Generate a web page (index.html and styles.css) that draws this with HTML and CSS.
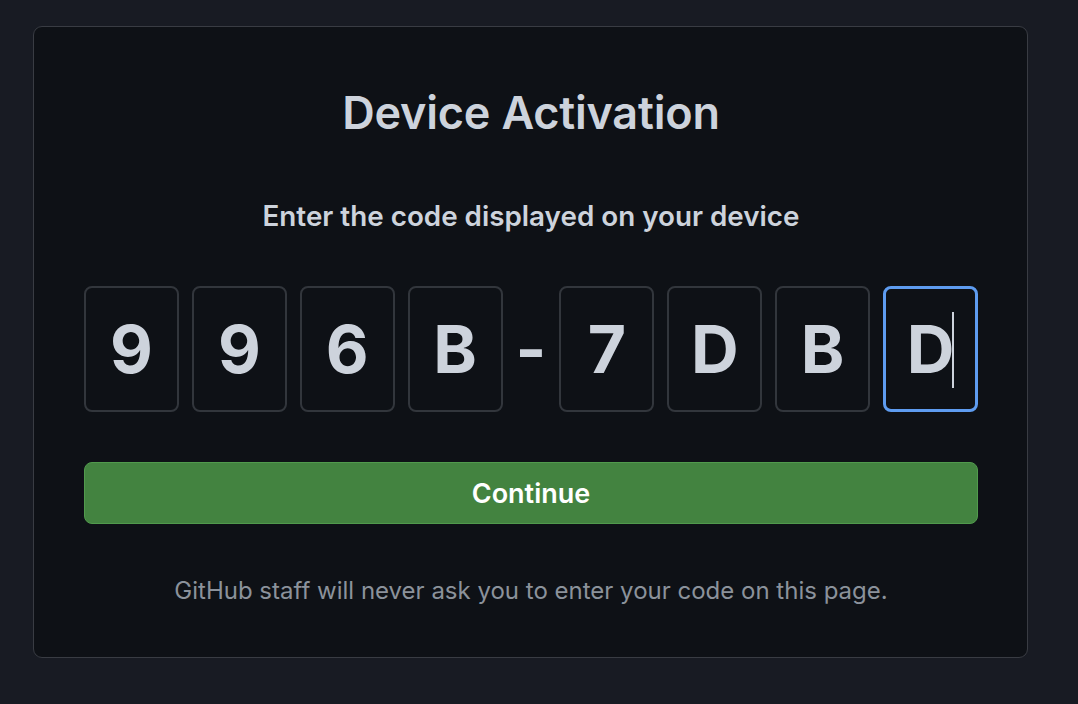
FILE: index.html
```html
<!DOCTYPE html>
<html lang="en">
<head>
<meta charset="utf-8">
<title>Device Activation</title>
<link rel="stylesheet" href="styles.css">
</head>
<body>
<main class="card">
  <h1 class="title">Device Activation</h1>
  <p class="subtitle">Enter the code displayed on your device</p>
  <div class="code-row">
    <div class="digit">9</div>
    <div class="digit">9</div>
    <div class="digit">6</div>
    <div class="digit">B</div>
    <div class="dash">-</div>
    <div class="digit">7</div>
    <div class="digit">D</div>
    <div class="digit">B</div>
    <div class="digit digit-focus">D<span class="caret"></span></div>
  </div>
  <button class="continue" type="button">Continue</button>
  <p class="notice">GitHub staff will never ask you to enter your code on this page.</p>
</main>
</body>
</html>
```

FILE: styles.css
```css
html, body {
  margin: 0;
  padding: 0;
  background: #181b23;
  font-family: Inter, "Noto Sans", "Liberation Sans", sans-serif;
}

body {
  padding: 26px 0 0 33px;
}

.card {
  box-sizing: border-box;
  width: 995px;
  background: #0e1116;
  border: 1.5px solid #393c43;
  border-radius: 9px;
  padding: 58px 49px 52px 50px;
  display: flex;
  flex-direction: column;
  align-items: stretch;
}

.title {
  margin: 0;
  text-align: center;
  font-size: 45px;
  line-height: 56px;
  font-weight: 600;
  color: #cdd3dc;
  letter-spacing: -0.2px;
}

.subtitle {
  margin: 59px 0 0;
  text-align: center;
  font-size: 27.8px;
  line-height: 32px;
  font-weight: 600;
  color: #cdd3dc;
}

.code-row {
  margin-top: 54px;
  display: flex;
  gap: 13px;
  height: 126px;
}

.digit {
  box-sizing: border-box;
  position: relative;
  width: 95px;
  height: 126px;
  border: 2px solid #32363c;
  border-radius: 8px;
  display: flex;
  align-items: center;
  justify-content: center;
  font-size: 66px;
  font-weight: 700;
  color: #cdd3dc;
}

.digit-focus {
  border: 3px solid #5e9cf0;
}

.caret {
  position: absolute;
  left: 66px;
  top: 23px;
  width: 1.5px;
  height: 76px;
  background: #cdd3dc;
}

.dash {
  flex: 1;
  display: flex;
  align-items: center;
  justify-content: center;
  font-size: 66px;
  font-weight: 700;
  color: #cdd3dc;
}

.continue {
  margin-top: 50px;
  height: 62px;
  border: 1px solid #519a4d;
  border-radius: 8px;
  background: #438340;
  color: #ffffff;
  font-family: inherit;
  font-size: 27px;
  font-weight: 600;
  cursor: pointer;
}

.notice {
  margin: 53px 0 0;
  text-align: center;
  font-size: 24px;
  line-height: 28px;
  color: #8b929b;
}
```
